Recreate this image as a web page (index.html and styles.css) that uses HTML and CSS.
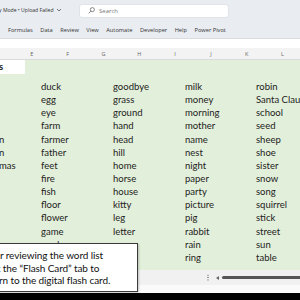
FILE: index.html
```html
<!DOCTYPE html>
<html>
<head>
<meta charset="utf-8">
<link rel="stylesheet" href="styles.css">
</head>
<body>
<div class="app">
  <div class="titlebar">
    <div class="title-group">
      <span class="doc-title">y Mode • Upload Failed</span>
      <svg class="chev" width="6" height="4" viewBox="0 0 6 4"><path d="M1 1 L3 3 L5 1" fill="none" stroke="#555" stroke-width="0.8"/></svg>
    </div>
    <div class="search">
      <svg class="search-icon" width="7" height="7" viewBox="0 0 8 8"><circle cx="5" cy="3" r="2.3" fill="none" stroke="#666" stroke-width="0.9"/><path d="M3.3 4.7 L0.8 7.2" stroke="#666" stroke-width="0.9"/></svg>
      <span class="search-text">Search</span>
    </div>
  </div>
  <div class="menubar">
    <span>Formulas</span>
    <span>Data</span>
    <span>Review</span>
    <span>View</span>
    <span>Automate</span>
    <span>Developer</span>
    <span>Help</span>
    <span>Power Pivot</span>
  </div>
  <div class="formulabar"></div>
  <div class="colheads">
    <span>E</span><span>F</span><span>G</span><span>H</span><span>I</span><span>J</span><span>K</span><span>L</span>
  </div>
  <div class="sheet">
    <div class="titlecell">s</div>
    <div class="words">
      <div class="col col-frag">
        <div></div><div></div><div></div><div></div><div>n</div><div>n</div><div>mas</div>
      </div>
      <div class="col">
        <div>duck</div><div>egg</div><div>eye</div><div>farm</div><div>farmer</div><div>father</div><div>feet</div><div>fire</div><div>fish</div><div>floor</div><div>flower</div><div>game</div><div>garden</div><div>gift</div>
      </div>
      <div class="col">
        <div>goodbye</div><div>grass</div><div>ground</div><div>hand</div><div>head</div><div>hill</div><div>home</div><div>horse</div><div>house</div><div>kitty</div><div>leg</div><div>letter</div><div>man</div><div>men</div>
      </div>
      <div class="col">
        <div>milk</div><div>money</div><div>morning</div><div>mother</div><div>name</div><div>nest</div><div>night</div><div>paper</div><div>party</div><div>picture</div><div>pig</div><div>rabbit</div><div>rain</div><div>ring</div>
      </div>
      <div class="col">
        <div>robin</div><div>Santa Claus</div><div>school</div><div>seed</div><div>sheep</div><div>shoe</div><div>sister</div><div>snow</div><div>song</div><div>squirrel</div><div>stick</div><div>street</div><div>sun</div><div>table</div>
      </div>
    </div>
  </div>
  <div class="statusbar">
    <span class="vdots"></span>
    <span class="sarrow"></span>
    <span class="sthumb"></span>
  </div>
  <div class="whitestrip"></div>
  <div class="blackstrip"></div>

  <div class="callout">
    <p>After reviewing the word list</p>
    <p>click the “Flash Card” tab to</p>
    <p>return to the digital flash card.</p>
  </div>
</div>
</body>
</html>
```
FILE: styles.css
```css
* { box-sizing: border-box; margin: 0; padding: 0; }
html, body { width: 300px; height: 300px; overflow: hidden; background: #fff; }
body { font-family: "Open Sans", "Noto Sans", sans-serif; color: #222; }
.app { position: relative; width: 300px; height: 300px; overflow: hidden; display: flex; flex-direction: column; }

.titlebar { height: 20px; background: #e9ecf1; display: flex; align-items: center; }
.title-group { width: 79px; display: flex; align-items: center; white-space: nowrap; overflow: hidden; }
.doc-title { font-size: 5.1px; color: #333; margin-left: -1px; }
.chev { margin-left: 2px; }
.search { width: 150px; height: 14px; margin-top: 1px; background: #fff; border-radius: 3px; border: 1px solid #e0e3e8; display: flex; align-items: center; padding-left: 8px; }
.search-icon { margin-right: 4px; }
.search-text { font-size: 6px; color: #777; }

.menubar { height: 18px; background: #e9ecf1; display: flex; align-items: center; gap: 7.5px; padding-left: 8px; padding-top: 1px; font-size: 5.7px; color: #333; white-space: nowrap; }

.formulabar { height: 10px; background: #fff; border-top: 1px solid #d8dbe0; }
.colheads { height: 12px; background: #f3f3f3; border-bottom: 1px solid #dadada; display: grid; grid-template-columns: repeat(8, 35.8px); padding-left: 14px; font-size: 5.5px; color: #666; line-height: 12px; }
.colheads span { text-align: center; }

.sheet { height: 210px; background: #e2efda; }
.titlecell { width: 25px; height: 14px; background: #fff; font-family: "Lato", sans-serif; font-weight: 700; font-size: 9.5px; line-height: 14px; text-indent: -1px; }
.words { display: grid; grid-template-columns: 41px 72px 72px 71px 44px; margin-top: 6px; font-family: "Lato", sans-serif; font-size: 9.5px; color: #222; white-space: nowrap; }
.col > div { height: 13.15px; line-height: 13.15px; }
.col-frag > div { text-indent: -1px; }

.statusbar { height: 15px; background: #f1f1f1; display: flex; align-items: center; padding-left: 207px; gap: 4px; }
.vdots { width: 1.5px; height: 7px; background: radial-gradient(circle, #888 0.7px, transparent 0.8px) 0 0 / 1.5px 2.4px repeat-y; }
.sarrow { width: 0; height: 0; border-top: 2.5px solid transparent; border-bottom: 2.5px solid transparent; border-right: 3px solid #666; margin-left: 3px; }
.sthumb { flex: 1; height: 3px; background: #555; border-radius: 2px; margin-left: -1px; margin-right: -4px; }
.whitestrip { height: 8px; background: #fafafa; }
.blackstrip { height: 7px; background: #000; }

.callout { position: absolute; left: -28px; top: 243px; width: 166px; height: 49px; background: #fff; border: 1.5px solid #3a3a3a; padding: 5px 0 0 8.5px; font-family: "Lato", sans-serif; font-size: 10px; letter-spacing: -0.1px; line-height: 12.5px; color: #111; box-shadow: 1px 1px 2px rgba(0,0,0,0.2); }
.callout p { white-space: nowrap; }
```
